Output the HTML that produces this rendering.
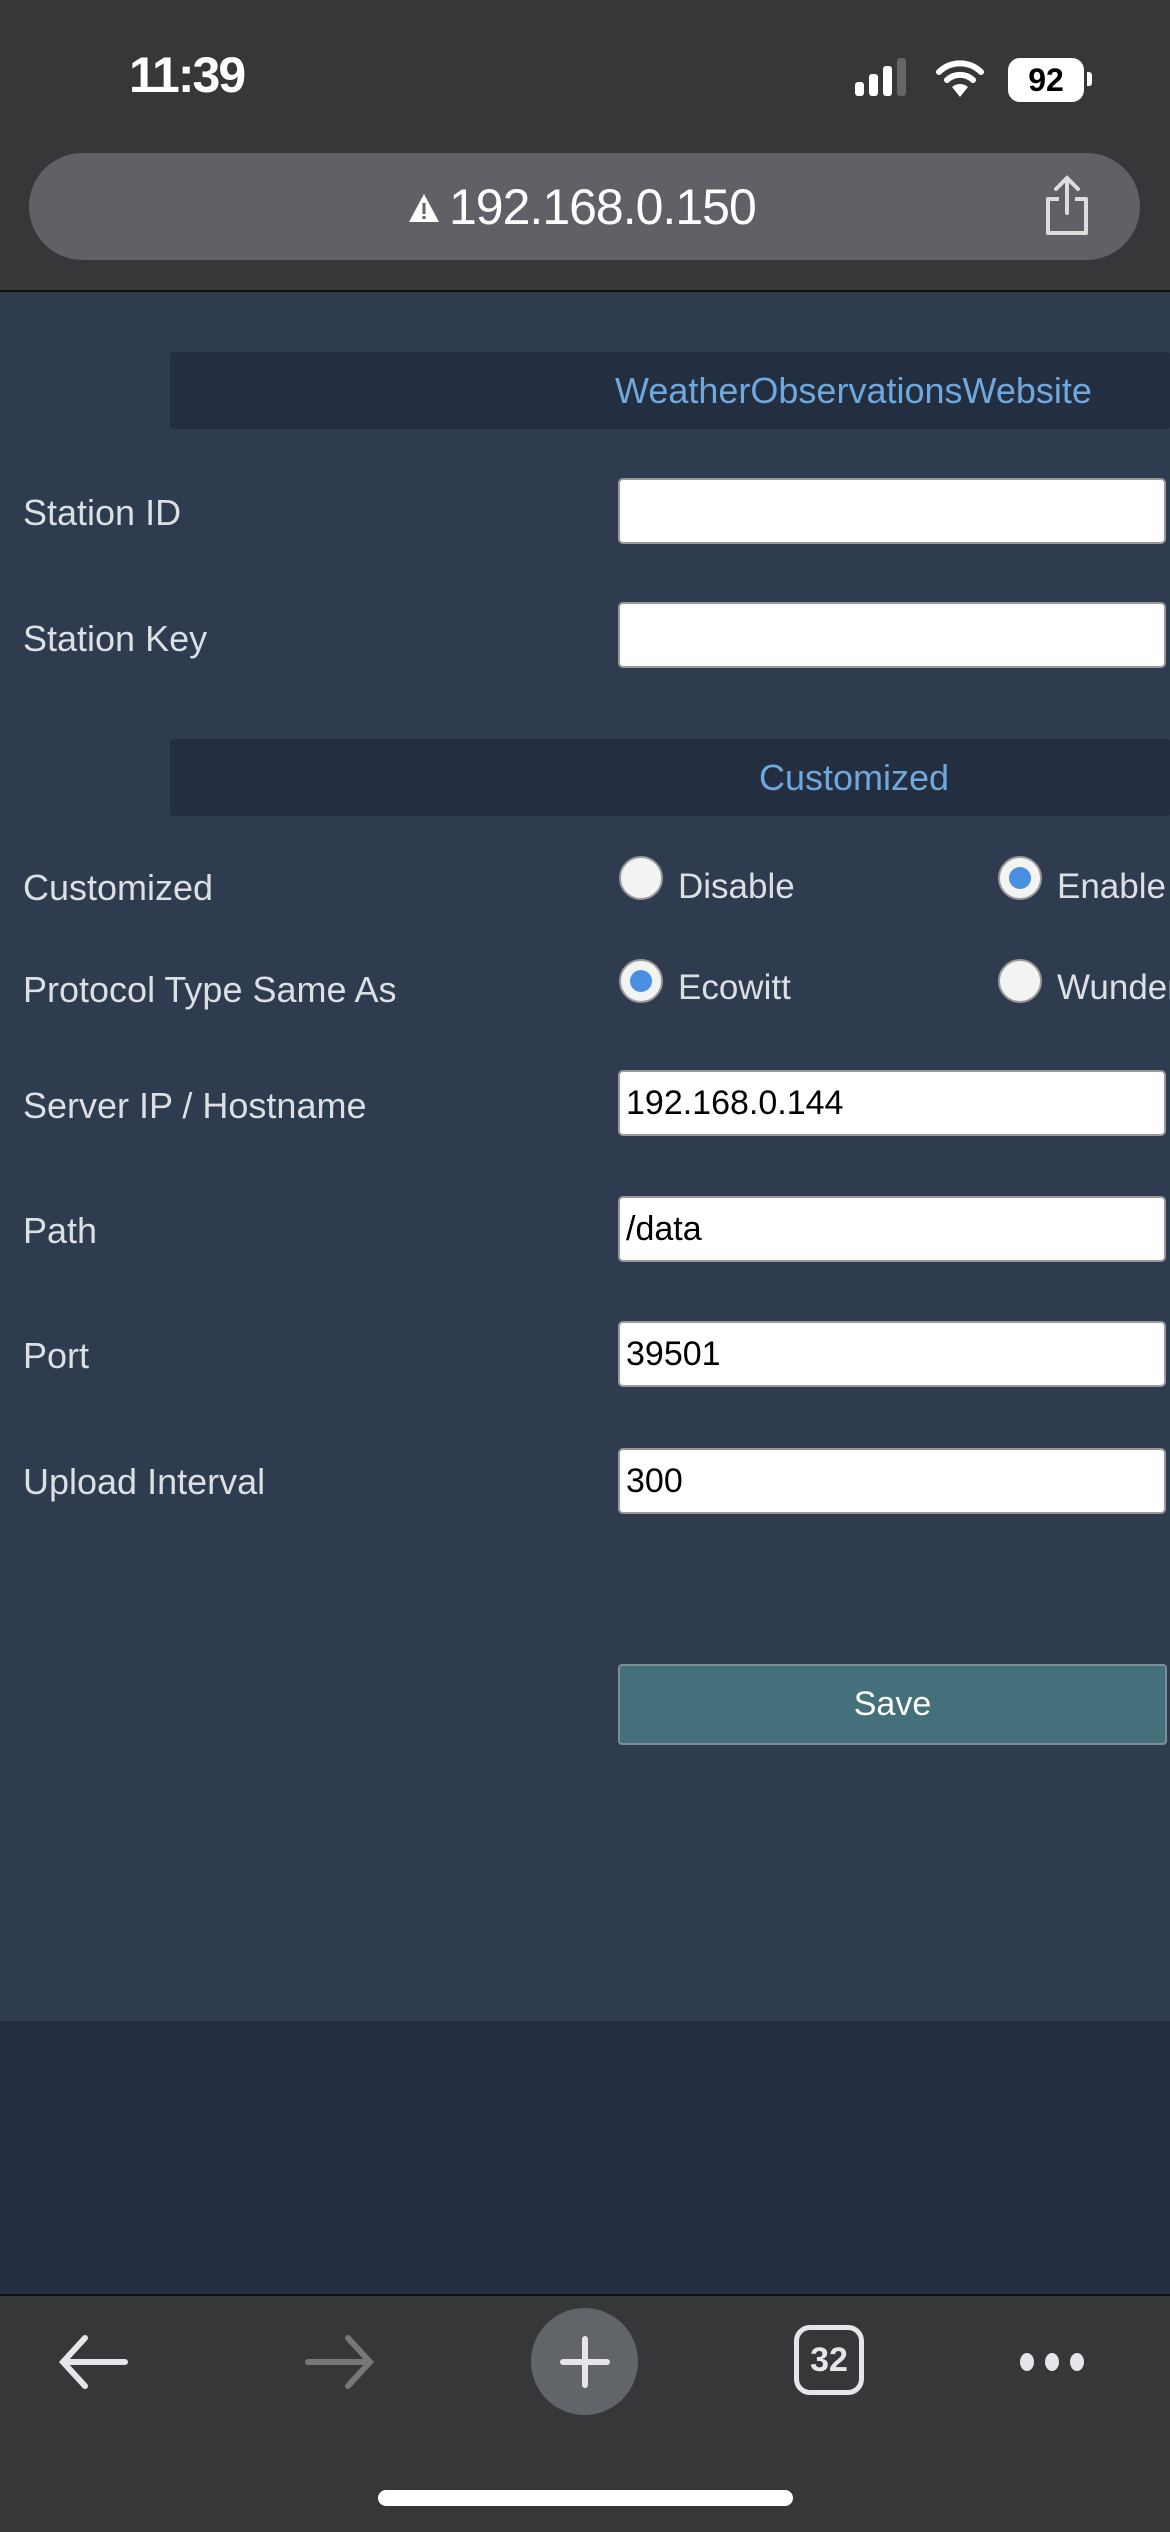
<!DOCTYPE html>
<html><head><meta charset="utf-8"><style>
*{margin:0;padding:0;box-sizing:border-box}
html{width:1170px;height:2532px;overflow:hidden}
body{width:1170px;height:2532px;overflow:hidden;background:#363739;font-family:"Liberation Sans",Arial,sans-serif;position:relative}
.a{position:absolute;white-space:nowrap}
.lbl{position:absolute;left:23px;color:#dcdfe4;font-size:36px;transform:translateY(-50%);white-space:nowrap}
.inp{position:absolute;left:618px;width:548px;height:66px;background:#fff;border:2px solid #999;border-radius:5px;font-size:34px;color:#000;padding-left:6px;line-height:62px}
.hdr{position:absolute;left:170px;width:1000px;height:77px;background:#232f40;border-radius:3px;color:#6fa8dc;font-size:36px;line-height:77px;white-space:nowrap;overflow:hidden}
.rad{position:absolute;width:44px;height:44px;border-radius:50%;background:#f3f3f3;border:2px solid #9a9a9a;transform:translate(-50%,-50%)}
.rad.on::after{content:"";position:absolute;left:9px;top:9px;width:22px;height:22px;border-radius:50%;background:#4a90e2}
.rt{position:absolute;color:#dcdfe4;font-size:35px;transform:translateY(-50%);white-space:nowrap;overflow:hidden}
</style></head><body>
<div class="a" style="left:129px;top:46px;color:#fff;font-size:50px;font-weight:bold;letter-spacing:-2px">11:39</div>
<svg class="a" style="left:853px;top:58px" width="60" height="40"><rect x="2" y="24" width="9" height="14" rx="3" fill="#fff"/><rect x="16" y="16" width="9" height="22" rx="3" fill="#fff"/><rect x="30" y="8" width="9" height="30" rx="3" fill="#fff"/><rect x="44" y="0" width="9" height="38" rx="3" fill="#666"/></svg>
<svg class="a" style="left:935px;top:56px" width="50" height="42" viewBox="0 0 50 42"><path d="M4 16a30 30 0 0 1 42 0" stroke="#fff" stroke-width="6" fill="none" stroke-linecap="round"/><path d="M12 24a19 19 0 0 1 26 0" stroke="#fff" stroke-width="6" fill="none" stroke-linecap="round"/><path d="M17 31 L25 41 L33 31 a12 12 0 0 0 -16 0z" fill="#fff"/></svg>
<div class="a" style="left:1008px;top:58px;width:76px;height:44px;background:#fff;border-radius:12px;color:#000;font-weight:bold;font-size:32px;text-align:center;line-height:44px">92</div>
<div class="a" style="left:1087px;top:72px;width:5px;height:14px;background:#fff;border-radius:0 3px 3px 0"></div>
<div class="a" style="left:29px;top:153px;width:1111px;height:107px;background:#5f6166;border-radius:54px"></div>
<svg class="a" style="left:408px;top:193px" width="32" height="30"><path d="M16 1 L31 29 H1z" fill="#fff"/><rect x="14.5" y="10" width="3" height="11" fill="#5f6166"/><rect x="14.5" y="23" width="3" height="3" fill="#5f6166"/></svg>
<div class="a" style="left:449px;top:178px;color:#fff;font-size:50px;letter-spacing:-1px">192.168.0.150</div>
<svg class="a" style="left:1042px;top:175px" width="50" height="62"><path d="M25 4 V38 M14 14 L25 3 L36 14" stroke="#ddd" stroke-width="4" fill="none" stroke-linecap="round"/><path d="M17 24 H6 V58 H44 V24 H33" stroke="#ddd" stroke-width="4" fill="none" stroke-linejoin="round"/></svg>
<div class="a" style="left:0;top:290px;width:1170px;height:2px;background:#111"></div>
<div class="a" style="left:0;top:292px;width:1170px;height:1729px;background:#2f3b4e"></div>
<div class="a" style="left:0;top:2021px;width:1170px;height:274px;background:#232f41"></div>
<div class="a" style="left:0;top:2294px;width:1170px;height:2px;background:#111"></div>

<div class="hdr" style="top:352px;padding-left:445px">WeatherObservationsWebsite</div>
<div class="lbl" style="top:513px">Station ID</div><div class="inp" style="top:478px"></div>
<div class="lbl" style="top:639px">Station Key</div><div class="inp" style="top:602px"></div>
<div class="hdr" style="top:739px;padding-left:589px">Customized</div>
<div class="lbl" style="top:888px">Customized</div>
<div class="rad" style="left:641px;top:878px"></div><div class="rt" style="left:678px;top:887px">Disable</div>
<div class="rad on" style="left:1020px;top:878px"></div><div class="rt" style="left:1057px;top:887px;width:113px">Enable</div>
<div class="lbl" style="top:990px">Protocol Type Same As</div>
<div class="rad on" style="left:641px;top:981px"></div><div class="rt" style="left:678px;top:988px">Ecowitt</div>
<div class="rad" style="left:1020px;top:981px"></div><div class="rt" style="left:1057px;top:988px;width:113px">Wunderground</div>
<div class="lbl" style="top:1106px">Server IP / Hostname</div><div class="inp" style="top:1070px">192.168.0.144</div>
<div class="lbl" style="top:1231px">Path</div><div class="inp" style="top:1196px">/data</div>
<div class="lbl" style="top:1356px">Port</div><div class="inp" style="top:1321px">39501</div>
<div class="lbl" style="top:1482px">Upload Interval</div><div class="inp" style="top:1448px">300</div>
<div class="a" style="left:618px;top:1664px;width:549px;height:81px;background:#44707b;border:2px solid #7a8f98;border-radius:4px;color:#fff;font-size:34px;text-align:center;line-height:77px">Save</div>

<svg class="a" style="left:55px;top:2330px" width="80" height="64"><path d="M70 32 H10 M30 8 L8 32 L30 56" stroke="#e6e6ea" stroke-width="6" fill="none" stroke-linecap="round"/></svg>
<svg class="a" style="left:300px;top:2330px" width="80" height="64"><path d="M8 32 H68 M48 8 L70 32 L48 56" stroke="#777" stroke-width="6" fill="none" stroke-linecap="round"/></svg>
<div class="a" style="left:531px;top:2308px;width:107px;height:107px;border-radius:50%;background:#616468"></div>
<svg class="a" style="left:560px;top:2336px" width="50" height="52"><path d="M25 3 V49 M3 26 H47" stroke="#e6e6ea" stroke-width="6" stroke-linecap="round"/></svg>
<div class="a" style="left:794px;top:2325px;width:70px;height:70px;border:5px solid #e6e6ea;border-radius:16px;color:#e6e6ea;font-size:34px;font-weight:bold;text-align:center;line-height:60px">32</div>
<div class="a" style="left:1020px;top:2353px;width:14px;height:18px;border-radius:50%;background:#e6e6ea"></div>
<div class="a" style="left:1045px;top:2353px;width:14px;height:18px;border-radius:50%;background:#e6e6ea"></div>
<div class="a" style="left:1070px;top:2353px;width:14px;height:18px;border-radius:50%;background:#e6e6ea"></div>
<div class="a" style="left:378px;top:2490px;width:415px;height:16px;border-radius:8px;background:#fff"></div>
</body></html>
